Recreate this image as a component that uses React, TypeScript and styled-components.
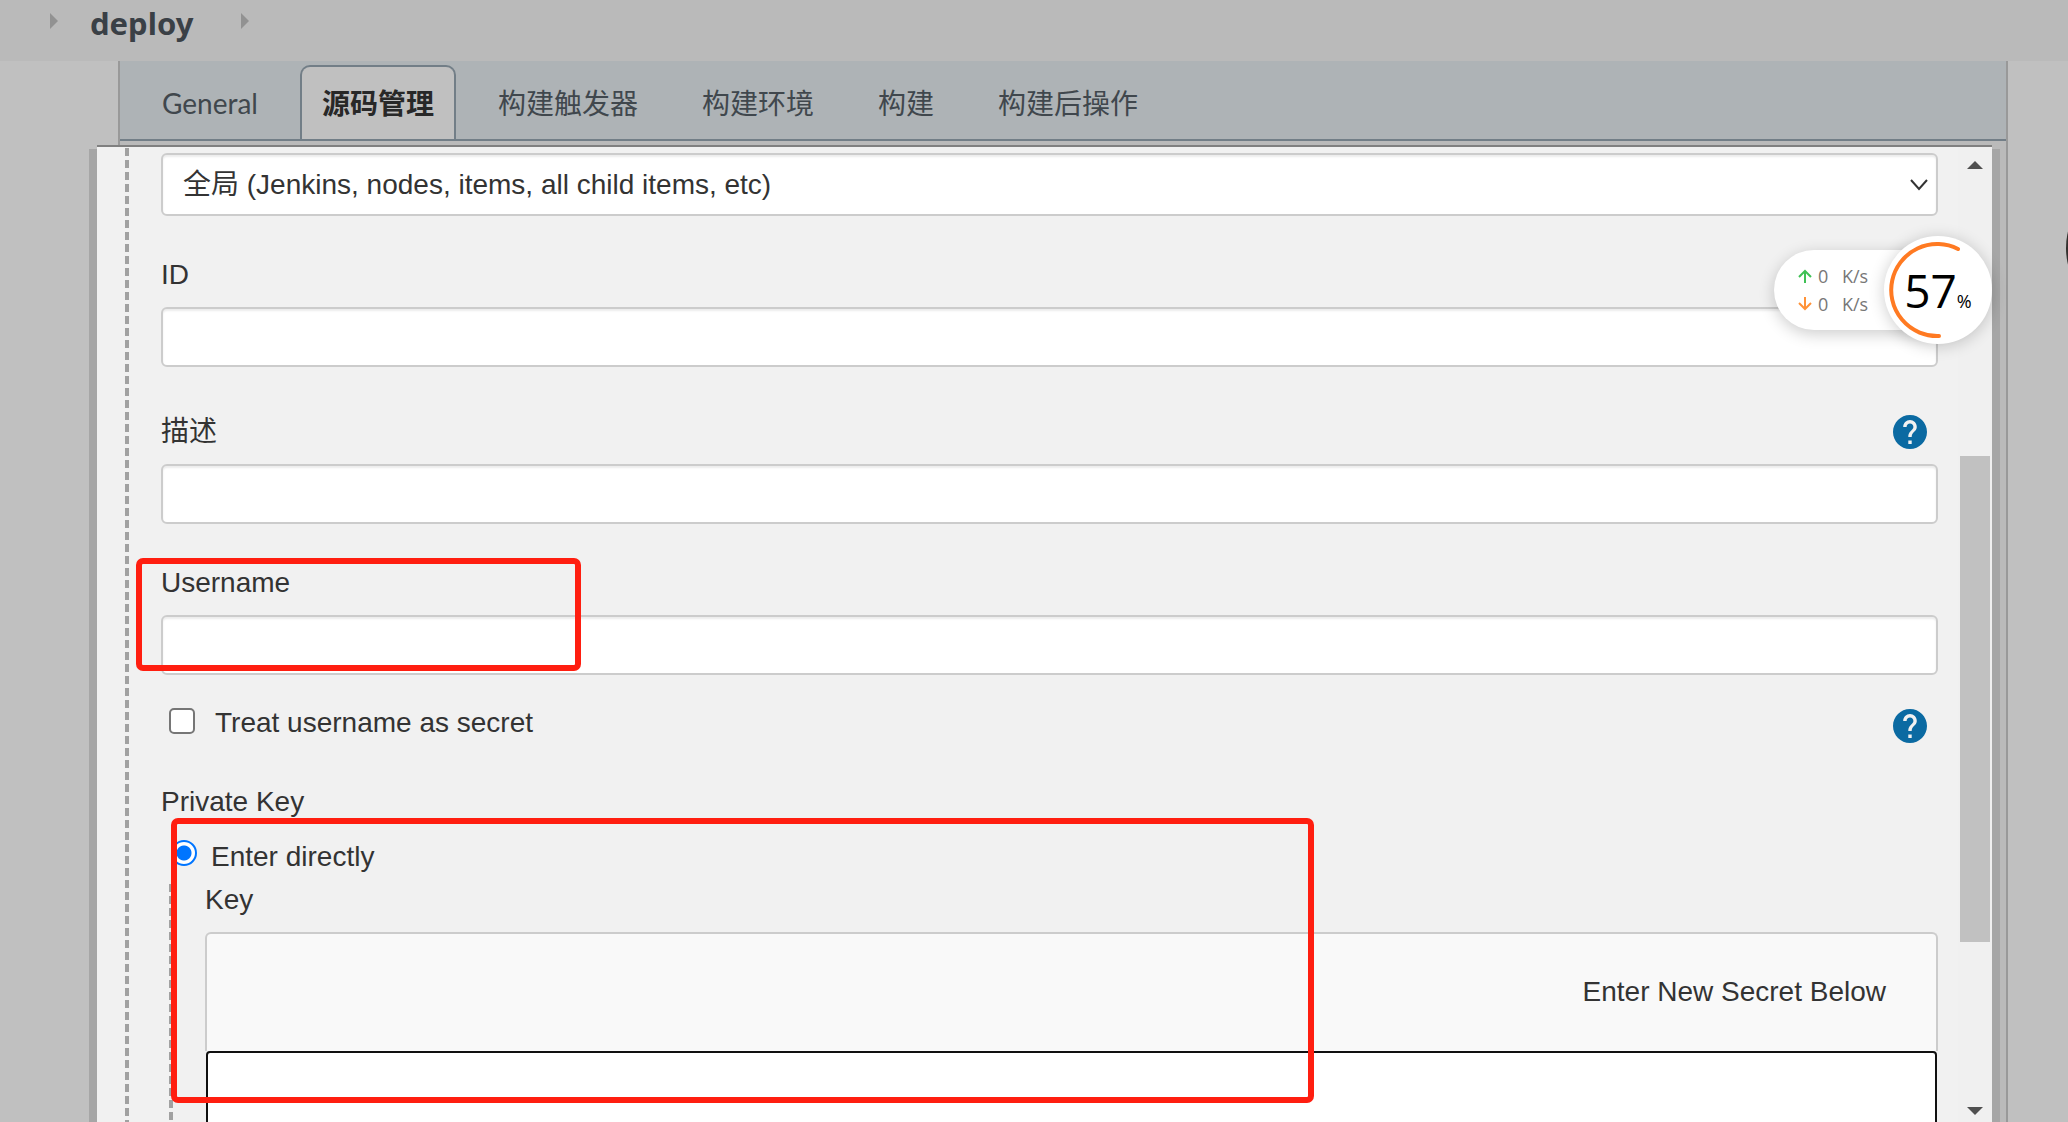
import React from "react";
import styled, { createGlobalStyle, css } from "styled-components";

const sans = `"Noto Sans", "Noto Sans CJK SC", sans-serif`;
const arial = `"Liberation Sans", "Noto Sans CJK SC", sans-serif`;

const GlobalStyle = createGlobalStyle`
  *, *::before, *::after { box-sizing: border-box; }
  html, body, #root { height: 100%; }
  body {
    margin: 0;
    overflow: hidden;
    background: #c0c0c0;
    color: #333;
    font-family: ${arial};
    font-size: 28px;
    line-height: 40px;
  }
`;

const Page = styled.div`
  position: relative;
  display: flex;
  flex-direction: column;
  height: 100vh;
  overflow: hidden;
`;

const Breadcrumbs = styled.nav`
  flex: none;
  display: flex;
  align-items: flex-start;
  height: 61px;
  padding-left: 50px;
  background: #bababa;
`;

const Separator = styled.svg`
  flex: none;
  width: 8px;
  height: 16px;
  margin-top: 13px;
  fill: #929292;
`;

const Crumb = styled.a`
  margin: 0 48px 0 32px;
  padding-top: 2px;
  color: #3a4046;
  font: bold 31px/42px ${sans};
  text-decoration: none;
`;

const ConfigPanel = styled.main`
  flex: 1;
  margin: 0 60px 0 118px;
  border: solid #999;
  border-width: 0 2px;
  background: #bababa;
`;

const TabBar = styled.div`
  display: flex;
  align-items: flex-end;
  gap: 20px;
  height: 80px;
  padding-left: 20px;
  border-bottom: 2px solid #727e87;
  background: #aeb3b6;
`;

const Tab = styled.button<{ $active?: boolean }>`
  height: 74px;
  padding: 0 20px;
  border: 2px solid transparent;
  border-bottom: 0;
  border-radius: 10px 10px 0 0;
  background: transparent;
  color: #40474d;
  font: 28px/40px Lato, "Noto Sans CJK SC", sans-serif;
  white-space: nowrap;
  ${(p) =>
    p.$active &&
    css`
      border-color: #727e87;
      background: #c0c0c0;
      color: #282828;
      font-weight: bold;
    `}
`;

const Dialog = styled.section`
  position: absolute;
  top: 145px;
  right: 76px;
  bottom: 0;
  left: 97px;
  display: flex;
  border-top: 2px solid #808080;
  background: #f1f1f1;
  box-shadow: -8px 4px 0 #a6a6a6, 8px 4px 0 #a6a6a6;
`;

const dashed = css`
  background: repeating-linear-gradient(#a1a1a1 0 8px, transparent 8px 12px) left top / 4px 100% no-repeat;
`;

const Form = styled.form`
  flex: 1;
  min-width: 0;
  margin: 1px 20px 0 28px;
  padding: 5px 0 0 36px;
  overflow: hidden;
  ${dashed}
`;

const fieldBox = css`
  display: block;
  width: 100%;
  border: 2px solid #ccc;
  border-radius: 6px;
  background: #fff;
  box-shadow: inset 0 2px 2px rgba(0, 0, 0, 0.08);
  color: #333;
  font: 28px/40px ${arial};
  outline: none;
`;

const SelectWrap = styled.div`
  position: relative;
`;

const Select = styled.select`
  ${fieldBox}
  height: 63px;
  padding: 0 20px;
  appearance: none;
`;

const Chevron = styled.svg`
  position: absolute;
  top: 26px;
  right: 9px;
  width: 20px;
  height: 12px;
  fill: none;
  stroke: #333;
  stroke-width: 2;
  pointer-events: none;
`;

const TextInput = styled.input`
  ${fieldBox}
  height: 60px;
  padding: 0 20px;
`;

const Field = styled.div<{ $top: number }>`
  margin-top: ${(p) => p.$top}px;
`;

const Row = styled.div`
  display: flex;
  align-items: flex-start;
  justify-content: space-between;
  padding-right: 10px;
`;

const FieldLabel = styled.label`
  display: block;
  height: 52px;
`;

const HelpButton = styled.button`
  flex: none;
  display: block;
  width: 36px;
  height: 36px;
  margin-top: 2px;
  padding: 1px;
  border: 0;
  background: none;
  svg {
    display: block;
  }
`;

const CheckRow = styled(Row)`
  height: 41px;
  margin-top: 31px;
  padding-left: 8px;
`;

const Choice = styled.label`
  display: flex;
  align-items: flex-start;
  line-height: 34px;
`;

const Checkbox = styled.input`
  appearance: none;
  width: 26px;
  height: 26px;
  margin: 2px 20px 0 0;
  border: 2px solid #767676;
  border-radius: 5px;
  background: #fff;
`;

const Radio = styled.input`
  appearance: none;
  width: 26px;
  height: 26px;
  margin: 0 14px 0 0;
  border: 2px solid #0075ff;
  border-radius: 50%;
  background: radial-gradient(circle, #0075ff 7px, #fff 8px);
`;

const KeySet = styled.fieldset`
  min-width: 0;
  margin: 35px 0 0;
  padding: 0;
  border: 0;
  legend {
    padding: 0;
  }
`;

const RadioRow = styled.div`
  padding: 18px 0 0 10px;
`;

const Nested = styled.div`
  margin: 10px 0 0 8px;
  padding-left: 36px;
  ${dashed}
`;

const NestedLabel = styled.label`
  display: block;
  height: 48px;
  line-height: 32px;
`;

const SecretHeader = styled.div`
  display: flex;
  align-items: center;
  justify-content: flex-end;
  height: 119px;
  padding: 0 50px 2px 20px;
  border: 2px solid #ccc;
  border-bottom: 0;
  border-radius: 6px 6px 0 0;
  background: #f9f9f9;
`;

const SecretInput = styled.textarea`
  display: block;
  width: calc(100% - 2px);
  height: 160px;
  margin: 0 1px;
  padding: 12px 20px;
  border: 2px solid #101010;
  border-radius: 4px;
  background: #fff;
  color: #333;
  font: 28px/40px ${arial};
  outline: none;
  resize: none;
`;

const Scrollbar = styled.div`
  flex: none;
  display: flex;
  flex-direction: column;
  align-items: center;
  width: 34px;
  padding: 14px 0 7px;
  background: #f0f0f0;
`;

const ScrollArrow = styled.svg`
  flex: none;
  width: 16px;
  height: 8px;
  fill: #505050;
`;

const ScrollTrack = styled.div`
  flex: 1;
  display: flex;
  flex-direction: column;
  width: 30px;
  &::before {
    content: "";
    flex: 287;
  }
  &::after {
    content: "";
    flex: 165;
  }
`;

const ScrollThumb = styled.div`
  flex: 486;
  background: #c1c1c1;
`;

const Highlight = styled.div<{ $x: number; $y: number; $w: number; $h: number }>`
  position: absolute;
  top: ${(p) => p.$y}px;
  left: ${(p) => p.$x}px;
  width: ${(p) => p.$w}px;
  height: ${(p) => p.$h}px;
  border: 6px solid #ff1e10;
  border-radius: 7px;
  pointer-events: none;
`;

const Monitor = styled.aside`
  position: absolute;
  top: 236px;
  right: 76px;
  display: flex;
  align-items: center;
  font-family: "Open Sans", sans-serif;
`;

const Speeds = styled.div`
  display: grid;
  grid-template-columns: 14px 10px 26px;
  align-content: center;
  align-items: center;
  column-gap: 6px;
  width: 164px;
  height: 80px;
  margin-right: -54px;
  padding-left: 24px;
  border-radius: 40px 0 0 40px;
  background: #fff;
  box-shadow: 0 4px 16px rgba(0, 0, 0, 0.2);
  color: #777;
  font-size: 18px;
  line-height: 28px;
  span {
    white-space: nowrap;
  }
  span:nth-child(3n) {
    padding-left: 8px;
  }
`;

const Gauge = styled.div`
  position: relative;
  display: flex;
  align-items: baseline;
  justify-content: center;
  width: 108px;
  height: 108px;
  border-radius: 50%;
  background: #fff;
  box-shadow: 0 2px 16px rgba(0, 0, 0, 0.2);
  color: #000;
  font-size: 18px;
  line-height: 108px;
  strong {
    font-size: 46px;
    font-weight: normal;
  }
  svg {
    position: absolute;
    inset: 0;
  }
`;

const EdgeBubble = styled.div`
  position: absolute;
  top: 178px;
  right: -138px;
  width: 140px;
  height: 140px;
  border-radius: 50%;
  background: #33302e;
`;

const Arrow = ({ up }: { up?: boolean }) => (
  <svg width="14" height="14" viewBox="0 0 14 14" fill="none" stroke={up ? "#3fc155" : "#ff9238"} strokeWidth="2">
    <path d={up ? "M7 14V2M1 8l6-6 6 6" : "M7 0v12M1 6l6 6 6-6"} />
  </svg>
);

const Help = ({ topic }: { topic: string }) => (
  <HelpButton type="button" aria-label={topic}>
    <svg width="34" height="34" viewBox="2 2 20 20">
      <path
        fill="#0b6aa2"
        d="M12 2C6.48 2 2 6.48 2 12s4.48 10 10 10 10-4.48 10-10S17.52 2 12 2zm1 17h-2v-2h2v2zm2.07-7.75l-.9.92C13.45 12.9 13 13.5 13 15h-2v-.5c0-1.1.45-2.1 1.17-2.83l1.24-1.26c.37-.36.59-.86.59-1.41 0-1.1-.9-2-2-2s-2 .9-2 2H8c0-2.21 1.79-4 4-4s4 1.79 4 4c0 .88-.36 1.68-.93 2.25z"
      />
    </svg>
  </HelpButton>
);

const tabs = ["General", "源码管理", "构建触发器", "构建环境", "构建", "构建后操作"];

export default function App() {
  return (
    <Page>
      <GlobalStyle />
      <Breadcrumbs>
        <Separator viewBox="0 0 8 16"><path d="M0 0l8 8-8 8z" /></Separator>
        <Crumb href="#deploy">deploy</Crumb>
        <Separator viewBox="0 0 8 16"><path d="M0 0l8 8-8 8z" /></Separator>
      </Breadcrumbs>
      <ConfigPanel>
        <TabBar>
          {tabs.map((name, i) => (
            <Tab key={name} type="button" $active={i === 1}>{name}</Tab>
          ))}
        </TabBar>
      </ConfigPanel>
      <EdgeBubble />

      <Dialog>
        <Form>
          <SelectWrap>
            <Select aria-label="范围">
              <option>全局 (Jenkins, nodes, items, all child items, etc)</option>
            </Select>
            <Chevron viewBox="0 0 20 12"><path d="M2 1l8 9 8-9" /></Chevron>
          </SelectWrap>
          <Field $top={39}>
            <FieldLabel htmlFor="id">ID</FieldLabel>
            <TextInput id="id" />
          </Field>
          <Field $top={45}>
            <Row>
              <FieldLabel htmlFor="description">描述</FieldLabel>
              <Help topic="描述" />
            </Row>
            <TextInput id="description" />
          </Field>
          <Field $top={39}>
            <FieldLabel htmlFor="username">Username</FieldLabel>
            <TextInput id="username" />
          </Field>
          <CheckRow>
            <Choice>
              <Checkbox type="checkbox" />
              Treat username as secret
            </Choice>
            <Help topic="Treat username as secret" />
          </CheckRow>
          <KeySet>
            <legend>Private Key</legend>
            <RadioRow>
              <Choice>
                <Radio type="radio" name="source" defaultChecked />
                Enter directly
              </Choice>
            </RadioRow>
            <Nested>
              <NestedLabel htmlFor="key">Key</NestedLabel>
              <SecretHeader>Enter New Secret Below</SecretHeader>
              <SecretInput id="key" />
            </Nested>
          </KeySet>
        </Form>
        <Scrollbar>
          <ScrollArrow viewBox="0 0 16 8"><path d="M0 8l8-8 8 8z" /></ScrollArrow>
          <ScrollTrack><ScrollThumb /></ScrollTrack>
          <ScrollArrow viewBox="0 0 16 8"><path d="M0 0l8 8 8-8z" /></ScrollArrow>
        </Scrollbar>
      </Dialog>

      <Highlight $x={136} $y={558} $w={445} $h={113} />
      <Highlight $x={171} $y={818} $w={1143} $h={285} />

      <Monitor>
        <Speeds>
          <Arrow up /><span>0</span><span>K/s</span>
          <Arrow /><span>0</span><span>K/s</span>
        </Speeds>
        <Gauge>
          <svg width="108" height="108" fill="none" stroke="#ff7a22" strokeWidth="4" strokeLinecap="round">
            <path d="M74 13A46 46 0 1 0 55 100" />
          </svg>
          <strong>57</strong>%
        </Gauge>
      </Monitor>
    </Page>
  );
}
